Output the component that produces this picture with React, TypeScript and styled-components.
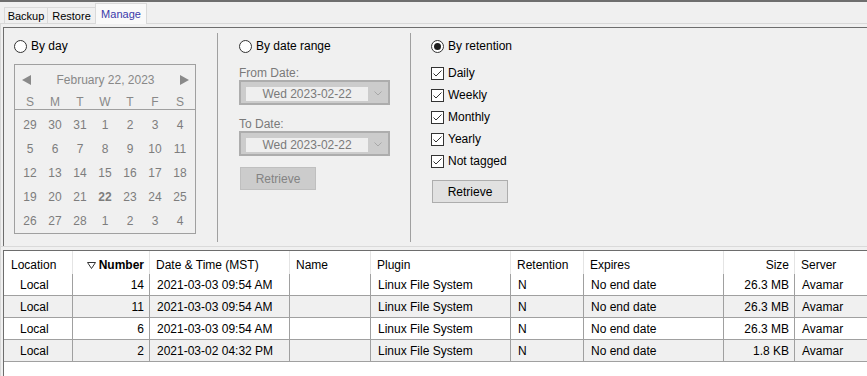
import React from "react";
import styled, { createGlobalStyle } from "styled-components";

const GlobalStyle = createGlobalStyle`
  html, body {
    margin: 0;
    padding: 0;
  }
  body {
    font-family: "Liberation Sans", Arial, sans-serif;
    font-size: 12px;
    color: #000;
    background: #f0f0f0;
  }
`;

const Window = styled.div`
  width: 867px;
  height: 376px;
  overflow: hidden;
  box-sizing: border-box;
  border-top: 2px solid #6e6e6e;
  background: #f0f0f0;
  display: flex;
  flex-direction: column;
`;

const TabStrip = styled.div`
  height: 21px;
  flex: none;
  display: flex;
  align-items: flex-end;
  padding-left: 4px;
`;

const Tab = styled.div<{ $active?: boolean; $w: number }>`
  box-sizing: border-box;
  width: ${(p) => p.$w}px;
  height: ${(p) => (p.$active ? 21 : 16)}px;
  margin-bottom: ${(p) => (p.$active ? -1 : 0)}px;
  margin-left: -1px;
  &:first-child {
    margin-left: 0;
  }
  border: 1px solid #d9d9d9;
  border-bottom: none;
  background: ${(p) => (p.$active ? "#f9f9f9" : "#f0f0f0")};
  color: ${(p) => (p.$active ? "#3a3aaa" : "#000")};
  font-size: 11px;
  display: flex;
  align-items: center;
  justify-content: center;
  position: relative;
  z-index: ${(p) => (p.$active ? 1 : 0)};
`;

const TabPane = styled.div`
  flex: 1;
  min-height: 0;
  display: flex;
  flex-direction: column;
  border-top: 1px solid #d9d9d9;
  border-left: 1px solid #d9d9d9;
  padding: 3px 0 0 2px;
`;

const TopPanel = styled.div`
  flex: none;
  height: 219px;
  box-sizing: border-box;
  display: flex;
  border-top: 1px solid #6d6d6d;
  border-left: 1px solid #6d6d6d;
`;

const Splitter = styled.div`
  flex: none;
  height: 4px;
  box-sizing: border-box;
  margin-left: -3px;
  border-top: 1px solid #dadada;
`;

const Section = styled.div<{ $w?: number; $pl: number }>`
  box-sizing: border-box;
  ${(p) => (p.$w ? `width: ${p.$w}px; flex: none;` : "flex: 1;")}
  padding: 10px 0 0 ${(p) => p.$pl}px;
  display: flex;
  flex-direction: column;
  align-items: flex-start;
`;

const VRule = styled.div`
  width: 1px;
  flex: none;
  background: #a0a0a0;
  margin: 5px 0 4px;
`;

const OptionRow = styled.label`
  display: flex;
  align-items: center;
  gap: 4px;
  height: 16px;
  line-height: 14px;
  white-space: nowrap;
`;

const RadioCircle = styled.span<{ $checked?: boolean }>`
  box-sizing: border-box;
  width: 13px;
  height: 13px;
  border-radius: 50%;
  border: 1px solid #333;
  background: #fff;
  display: flex;
  align-items: center;
  justify-content: center;
  &::after {
    content: "";
    display: ${(p) => (p.$checked ? "block" : "none")};
    width: 7px;
    height: 7px;
    border-radius: 50%;
    background: #1e1e1e;
  }
`;

const CheckBox = styled.span`
  box-sizing: border-box;
  width: 13px;
  height: 13px;
  border: 1px solid #333;
  background: #fff;
  display: flex;
`;

const Radio: React.FC<{ checked?: boolean; label: string }> = ({ checked, label }) => (
  <OptionRow>
    <RadioCircle $checked={checked} />
    {label}
  </OptionRow>
);

const CheckList = styled.div`
  margin-top: 8px;
  display: flex;
  flex-direction: column;
`;

const CheckRow = styled(OptionRow)`
  height: 22px;
`;

const Check: React.FC<{ label: string }> = ({ label }) => (
  <CheckRow>
    <CheckBox>
      <svg width="11" height="11" viewBox="0 0 11 11">
        <polyline points="1.5,5.5 4,8 9.5,2.5" fill="none" stroke="#333" strokeWidth="1" />
      </svg>
    </CheckBox>
    {label}
  </CheckRow>
);

/* calendar */

const Calendar = styled.div`
  margin-top: 10px;
  width: 182px;
  height: 170px;
  box-sizing: border-box;
  border: 1px solid #a0a0a0;
  color: #7d7d7d;
`;

const CalHeader = styled.div`
  height: 29px;
  display: flex;
  align-items: center;
  justify-content: space-between;
  padding: 0 6px 0 7px;
  color: #888;
`;

const CalGrid = styled.div`
  display: grid;
  grid-template-columns: repeat(7, 25px);
  justify-content: center;
`;

const WeekRow = styled(CalGrid)`
  height: 15px;
  align-items: center;
  border-bottom: 1px solid #a0a0a0;
  color: #888;
`;

const DayGrid = styled(CalGrid)`
  padding-top: 3px;
  grid-auto-rows: 24px;
`;

const CalCell = styled.div<{ $bold?: boolean }>`
  display: flex;
  align-items: center;
  justify-content: center;
  font-weight: ${(p) => (p.$bold ? "bold" : "normal")};
`;

const Arrow: React.FC<{ dir: "left" | "right" }> = ({ dir }) => (
  <svg width="9" height="10" viewBox="0 0 9 10">
    <polygon points={dir === "left" ? "9,0 0,5 9,10" : "0,0 9,5 0,10"} fill="#8a8a8a" />
  </svg>
);

/* date range */

const FieldLabel = styled.div`
  margin-top: 12px;
  height: 14px;
  line-height: 14px;
  color: #7a7a7a;
`;

const Combo = styled.div`
  box-sizing: border-box;
  width: 151px;
  height: 25px;
  border: 2px solid #adadad;
  background: #cccccc;
  display: flex;
  align-items: flex-start;
  padding: 5px 0 0 5px;
`;

const ComboField = styled.div`
  width: 122px;
  height: 14px;
  line-height: 14px;
  background: #efefef;
  color: #7a7a7a;
  text-align: center;
`;

const ComboArrow = styled.div`
  flex: 1;
  display: flex;
  justify-content: center;
  padding-top: 4px;
`;

const Button = styled.div<{ $disabled?: boolean }>`
  box-sizing: border-box;
  width: 76px;
  height: 23px;
  margin-left: 1px;
  display: flex;
  align-items: center;
  justify-content: center;
  border: 1px solid ${(p) => (p.$disabled ? "#bfbfbf" : "#adadad")};
  background: ${(p) => (p.$disabled ? "#cccccc" : "#e1e1e1")};
  color: ${(p) => (p.$disabled ? "#838383" : "#000")};
`;

const DateCombo: React.FC<{ value: string }> = ({ value }) => (
  <Combo>
    <ComboField>{value}</ComboField>
    <ComboArrow>
      <svg width="8" height="5" viewBox="0 0 8 5">
        <polyline points="0.5,0.5 4,4 7.5,0.5" fill="none" stroke="#a8a8a8" strokeWidth="1" />
      </svg>
    </ComboArrow>
  </Combo>
);

/* table */

const columns = "69px 77px 140px 81px 140px 73px 140px 71px 1fr";

const TablePanel = styled.div`
  flex: 1;
  min-height: 0;
  border-top: 1px solid #6d6d6d;
  border-left: 1px solid #6d6d6d;
  background: #fff;
  overflow: hidden;
`;

const HeadRow = styled.div`
  display: grid;
  grid-template-columns: ${columns};
  height: 23px;
  background: #fff;
`;

const Row = styled.div<{ $odd: boolean }>`
  display: grid;
  grid-template-columns: ${columns};
  height: 22px;
  box-sizing: border-box;
  border-bottom: 1px solid #a0a0a0;
  background: ${(p) => (p.$odd ? "#f0f0f0" : "#fff")};
`;

type Align = "left" | "right";

const HeadCell = styled.div<{ $align?: Align; $pl?: number }>`
  box-sizing: border-box;
  display: flex;
  align-items: flex-start;
  justify-content: ${(p) => (p.$align === "right" ? "flex-end" : "flex-start")};
  gap: 3px;
  padding: 7px 5px 0 ${(p) => p.$pl ?? 6}px;
  line-height: 14px;
  border-right: 1px solid #e4e4e4;
  white-space: nowrap;
  overflow: hidden;
  &:last-child {
    border-right: none;
  }
`;

const SortMark = styled.svg`
  margin-top: 4px;
`;

const Cell = styled.div<{ $align?: Align; $pl?: number }>`
  box-sizing: border-box;
  display: flex;
  align-items: center;
  justify-content: ${(p) => (p.$align === "right" ? "flex-end" : "flex-start")};
  padding: 0 5px 0 ${(p) => p.$pl ?? 7}px;
  border-right: 1px solid #a0a0a0;
  white-space: nowrap;
  overflow: hidden;
  &:last-child {
    border-right: none;
  }
`;

const backups = [
  { num: 14, date: "2021-03-03 09:54 AM", size: "26.3 MB" },
  { num: 11, date: "2021-03-03 09:54 AM", size: "26.3 MB" },
  { num: 6, date: "2021-03-03 09:54 AM", size: "26.3 MB" },
  { num: 2, date: "2021-03-02 04:32 PM", size: "1.8 KB" },
];

const weekDays = ["S", "M", "T", "W", "T", "F", "S"];
const days = [
  29, 30, 31, 1, 2, 3, 4,
  5, 6, 7, 8, 9, 10, 11,
  12, 13, 14, 15, 16, 17, 18,
  19, 20, 21, 22, 23, 24, 25,
  26, 27, 28, 1, 2, 3, 4,
];

const App: React.FC = () => (
  <>
    <GlobalStyle />
    <Window>
      <TabStrip>
        <Tab $w={44}>Backup</Tab>
        <Tab $w={49}>Restore</Tab>
        <Tab $w={52} $active>
          Manage
        </Tab>
      </TabStrip>
      <TabPane>
        <TopPanel>
          <Section $w={213} $pl={10}>
            <Radio label="By day" />
            <Calendar>
              <CalHeader>
                <Arrow dir="left" />
                <span>February 22, 2023</span>
                <Arrow dir="right" />
              </CalHeader>
              <WeekRow>
                {weekDays.map((d, i) => (
                  <CalCell key={i}>{d}</CalCell>
                ))}
              </WeekRow>
              <DayGrid>
                {days.map((d, i) => (
                  <CalCell key={i} $bold={i === 24}>
                    {d}
                  </CalCell>
                ))}
              </DayGrid>
            </Calendar>
          </Section>
          <VRule />
          <Section $w={192} $pl={21}>
            <Radio label="By date range" />
            <FieldLabel>From Date:</FieldLabel>
            <DateCombo value="Wed 2023-02-22" />
            <FieldLabel>To Date:</FieldLabel>
            <DateCombo value="Wed 2023-02-22" />
            <Button $disabled style={{ marginTop: 11 }}>
              Retrieve
            </Button>
          </Section>
          <VRule />
          <Section $pl={20}>
            <Radio checked label="By retention" />
            <CheckList>
              <Check label="Daily" />
              <Check label="Weekly" />
              <Check label="Monthly" />
              <Check label="Yearly" />
              <Check label="Not tagged" />
            </CheckList>
            <Button style={{ marginTop: 8 }}>Retrieve</Button>
          </Section>
        </TopPanel>
        <Splitter />
        <TablePanel>
          <HeadRow>
            <HeadCell $pl={7}>Location</HeadCell>
            <HeadCell $align="right">
              <SortMark width="9" height="7" viewBox="0 0 9 7">
                <polygon points="0.5,0.5 8.5,0.5 4.5,6.5" fill="none" stroke="#333" strokeWidth="1" />
              </SortMark>
              <b>Number</b>
            </HeadCell>
            <HeadCell>Date &amp; Time (MST)</HeadCell>
            <HeadCell>Name</HeadCell>
            <HeadCell>Plugin</HeadCell>
            <HeadCell>Retention</HeadCell>
            <HeadCell>Expires</HeadCell>
            <HeadCell $align="right">Size</HeadCell>
            <HeadCell>Server</HeadCell>
          </HeadRow>
          {backups.map((b, i) => (
            <Row key={b.num} $odd={i % 2 === 1}>
              <Cell $pl={16}>Local</Cell>
              <Cell $align="right">{b.num}</Cell>
              <Cell>{b.date}</Cell>
              <Cell />
              <Cell>Linux File System</Cell>
              <Cell>N</Cell>
              <Cell>No end date</Cell>
              <Cell $align="right">{b.size}</Cell>
              <Cell>Avamar</Cell>
            </Row>
          ))}
        </TablePanel>
      </TabPane>
    </Window>
  </>
);

export default App;
